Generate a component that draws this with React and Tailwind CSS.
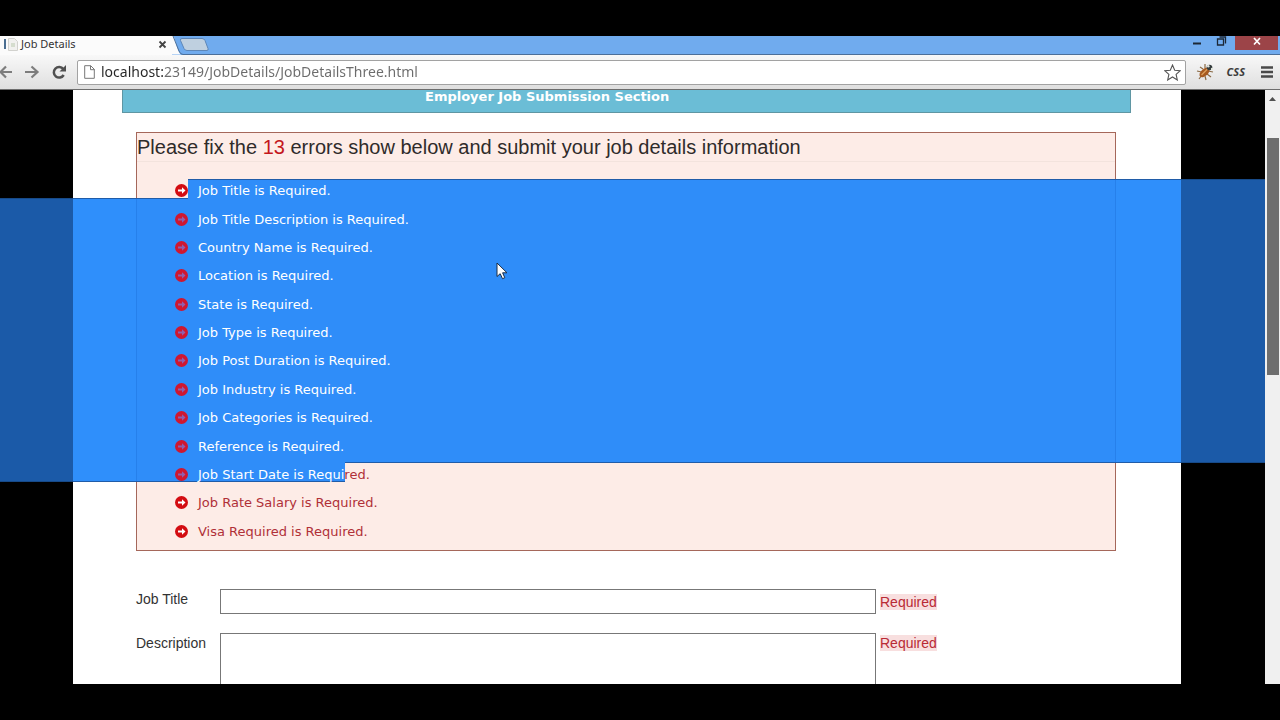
import clsx from "clsx";

const errors = [
  "Job Title is Required.",
  "Job Title Description is Required.",
  "Country Name is Required.",
  "Location is Required.",
  "State is Required.",
  "Job Type is Required.",
  "Job Post Duration is Required.",
  "Job Industry is Required.",
  "Job Categories is Required.",
  "Reference is Required.",
  "Job Start Date is Required.",
  "Job Rate Salary is Required.",
  "Visa Required is Required.",
];

// The selection stops in the middle of this row
const lastSelected = 10;
const selectedPart = "Job Start Date is Requi";

function Bullet({ selected }) {
  return (
    <svg className="size-[14px] shrink-0" viewBox="0 0 14 14" aria-hidden="true">
      <circle cx="6.5" cy="6.5" r="6.5" fill={selected ? "#cf1730" : "#d30c12"} />
      <path
        d="M3 5.5h4V3.2L10.5 6.500l-3.500 3.300V7.500H3z"
        fill={selected ? "#8f5fae" : "#ffffff"}
      />
    </svg>
  );
}

function TabStrip() {
  return (
    <div className="flex h-[19px] shrink-0 bg-[#70abee]">
      <div className="flex h-full w-[172px] shrink-0 items-start bg-[#fbfbfb] pl-1">
        <svg className="mt-[2px] h-[13px] w-[14px] shrink-0" viewBox="0 0 14 13" aria-hidden="true">
          <path d="M0 1h2v10H0z" fill="#4b6e91" />
          <path d="M4.5 .5h6l3 3v9h-9z" fill="#f1f1ef" stroke="#d2d2ce" />
          <path d="M7 6h4M7 8h4" stroke="#b9c9ad" />
        </svg>
        <span className="ml-[3px] flex-1 font-['Noto_Sans',sans-serif] text-[11px] leading-4 text-[#333]">Job Details</span>
        <button type="button" aria-label="Close tab" className="mr-[5px] mt-1">
          <svg className="size-[9px]" viewBox="0 0 9 9">
            <path d="M1.5 1.5l6 6M7.5 1.5l-6 6" stroke="#444" strokeWidth="1.8" />
          </svg>
        </button>
      </div>
      <button type="button" aria-label="New tab" className="h-full w-[40px] shrink-0">
        <svg className="h-[19px] w-[40px]" viewBox="0 0 40 19">
          <path d="M0 0h1c2 0 4 16 8 18.500H0z" fill="#fbfbfb" />
          <path d="M1 0l6 15q1.500 3.500 4 3.500H40" fill="none" stroke="#4c6f99" />
          <path d="M10 2.500h20q2 0 3 2l3 8q.6 2-1 2H15q-2 0-3-2L8.500 4.500q-.5-2 1.500-2z" fill="#bfd0e0" stroke="#5e87b8" />
        </svg>
      </button>
      <div className="flex-1 border-b border-[#4c6f99]" />
      <div className="flex items-start border-b border-[#4c6f99]">
        <button type="button" aria-label="Minimize" className="w-6">
          <svg className="h-[14px] w-6" viewBox="0 0 24 14">
            <path d="M6 7.500h8" stroke="#1c2836" strokeWidth="2" />
          </svg>
        </button>
        <button type="button" aria-label="Restore" className="w-6">
          <svg className="h-[14px] w-6" viewBox="0 0 24 14">
            <path d="M6.500 3h6v6h-6zM8.500 1h6v6.500" fill="none" stroke="#1c2836" strokeWidth="1.300" />
          </svg>
        </button>
        <button type="button" aria-label="Close" className="mr-[2px] flex h-[14px] w-[43px] justify-center bg-[#9c4448]">
          <svg className="h-[12px] w-[10px]" viewBox="0 0 10 12">
            <path d="M2 2l6 6.500M8 2l-6 6.500" stroke="#fff" strokeWidth="1.700" />
          </svg>
        </button>
      </div>
    </div>
  );
}

function Toolbar() {
  return (
    <div className="flex h-[35px] shrink-0 items-center border-b border-[#6d6d6d] bg-linear-to-b from-[#f8f8f8] to-[#dfdfdf]">
      <button type="button" aria-label="Back" className="w-[22px]">
        <svg className="h-4 w-[22px]" viewBox="0 0 22 16">
          <path d="M12 8H0M6 2.500L0.500 8 6 13.500" fill="none" stroke="#7d7d7d" strokeWidth="2.200" />
        </svg>
      </button>
      <button type="button" aria-label="Forward" className="w-[28px]">
        <svg className="h-4 w-[28px]" viewBox="0 0 28 16">
          <path d="M3 8h12M9.500 2.500L15.500 8l-6 5.500" fill="none" stroke="#7d7d7d" strokeWidth="2.200" />
        </svg>
      </button>
      <button type="button" aria-label="Reload" className="w-[27px]">
        <svg className="h-4 w-[27px]" viewBox="0 0 27 16">
          <path d="M13.300 5A5.300 5.300 0 1 0 13.700 11" fill="none" stroke="#505050" strokeWidth="2.500" />
          <path d="M16 1v6.500H9.500z" fill="#505050" />
        </svg>
      </button>
      <div className="flex h-[25px] flex-1 items-center rounded-[2px] border border-[#a2a2a2] bg-white pl-[6px] pr-1">
        <svg className="h-[14px] w-[11px]" viewBox="0 0 11 14" aria-hidden="true">
          <path d="M.7.700h6l3.600 3.600v9H.7zM6.500.700v4h4" fill="#fff" stroke="#777" />
        </svg>
        <input
          aria-label="Address"
          className="ml-[6px] min-w-0 flex-1 bg-[linear-gradient(90deg,#262626_62px,#6c6c6c_62px)] bg-clip-text font-['Noto_Sans',sans-serif] text-[14px] leading-5 text-transparent outline-none"
          defaultValue="localhost:23149/JobDetails/JobDetailsThree.html"
        />
        <button type="button" aria-label="Bookmark this page">
          <svg className="size-[17px]" viewBox="0 0 17 17">
            <path d="M8.500 1l2.200 5.200 5.600.5-4.200 3.700 1.200 5.600-4.800-3-4.800 3 1.200-5.600L.7 6.700l5.600-.5z" fill="#fff" stroke="#555" strokeWidth="1.100" />
          </svg>
        </button>
      </div>
      <button type="button" aria-label="Firebug" className="ml-[10px]">
        <svg className="h-[18px] w-[19px]" viewBox="0 0 19 18">
          <path d="M7 6L4 4M5.500 9L1 8M6 12l-3 4M9 13l1 4M11 11l4 3M12 8l5 1M9 5l0-4" fill="none" stroke="#8a6a45" strokeWidth="1.200" />
          <ellipse cx="8.500" cy="9.500" rx="6" ry="3.500" transform="rotate(-42 8.500 9.500)" fill="#a65a20" />
          <path d="M5.500 12l6-6" stroke="#dda05c" strokeWidth="1.200" />
          <circle cx="13.500" cy="4.500" r="2.800" fill="#333b3c" />
          <circle cx="12.300" cy="3.300" r="1.200" fill="#e5e8df" />
          <circle cx="16" cy="6" r="1.200" fill="#e5e8df" />
        </svg>
      </button>
      <button type="button" className="ml-3 font-['Noto_Sans',sans-serif] text-[11px] font-bold italic leading-4 text-[#3c3c3c]">
        CSS
      </button>
      <button type="button" aria-label="Menu" className="ml-4 mr-[7px]">
        <svg className="h-3 w-3" viewBox="0 0 12 12">
          <path d="M0 1.500h12M0 6h12M0 10.500h12" stroke="#4a4a4a" strokeWidth="2.400" />
        </svg>
      </button>
    </div>
  );
}

function ErrorSummary() {
  return (
    <section className="ml-[63px] mr-[65px] mt-[19px] h-[419px] border border-[#a5675a] bg-[#fdece7]">
      <h2 className="border-b border-[#f3e3dd] font-['Liberation_Sans',sans-serif] text-[20px] leading-7 text-[#2f2b2a]">
        Please fix the <span className="text-[#c4161c]">13</span> errors show below and submit your job details information
      </h2>
      <ul className="relative z-10 mt-[15px] grid h-[369px] auto-rows-fr pl-[38px] font-['DejaVu_Sans',Verdana,sans-serif] text-[13px]">
        {errors.map((text, idx) => (
          <li key={text} className="flex items-center gap-[9px] leading-4">
            <Bullet selected={idx > 0 && idx <= lastSelected} />
            {idx === lastSelected ? (
              <span className="text-[#b03038]">
                <span className="text-white">{selectedPart}</span>
                {text.slice(selectedPart.length)}
              </span>
            ) : (
              <span className={clsx(idx < lastSelected ? "text-white" : "text-[#b03038]")}>{text}</span>
            )}
          </li>
        ))}
      </ul>
    </section>
  );
}

function Selection() {
  return (
    <div aria-hidden="true">
      <div className="absolute left-0 top-[108px] h-[284px] w-[115px] border-y border-[#205ca8] bg-[#1883fb]/90" />
      <div className="absolute left-[115px] top-[89px] h-[303px] w-[157px] border-y border-[#205ca8] bg-[#1883fb]/90" />
      <div className="absolute left-[272px] right-0 top-[89px] h-[284px] border-y border-[#205ca8] bg-[#1883fb]/90" />
    </div>
  );
}

function Required() {
  return <span className="bg-[#f8dfdf] leading-4 text-[#b92a35]">Required</span>;
}

function JobForm() {
  return (
    <form className="ml-[63px] mt-[38px] font-['Liberation_Sans',sans-serif] text-[14px] leading-5 text-[#333]">
      <div className="flex items-start">
        <label htmlFor="title" className="w-[84px]">Job Title</label>
        <input id="title" className="h-[25px] w-[656px] border border-[#777] bg-white px-1" />
        <div className="ml-1 flex h-[25px] items-center">
          <Required />
        </div>
      </div>
      <div className="mt-[19px] flex items-start">
        <label htmlFor="description" className="w-[84px]">Description</label>
        <textarea id="description" className="h-[120px] w-[656px] resize-none border border-[#777] bg-white px-1" />
        <div className="ml-1 flex h-5 items-center">
          <Required />
        </div>
      </div>
    </form>
  );
}

export default function App() {
  return (
    <div className="flex h-screen flex-col overflow-hidden bg-black py-9">
      <TabStrip />
      <Toolbar />

      <main className="flex min-h-0 flex-1 overflow-hidden">
        <div className="w-[73px] shrink-0 pt-[108px]">
          <div className="h-[284px] border-y border-[#174a88] bg-[#1b5aa8]" />
        </div>

        <div className="relative flex-1 overflow-hidden bg-white">
          <header className="ml-[49px] mr-[50px] h-[23px] border border-t-0 border-[#5f96a3] bg-[#6bbdd6] pl-[302px] font-['DejaVu_Sans',Verdana,sans-serif] text-[13px] font-bold leading-[14px] text-white">
            Employer Job Submission Section
          </header>
          <ErrorSummary />
          <JobForm />
          <Selection />
          {/* Mouse pointer */}
          <svg className="absolute left-[423px] top-[172px] h-[18px] w-3" viewBox="0 0 12 18" aria-hidden="true">
            <path d="M1 1v13.500l3.200-2.800 2.300 5 2.300-1-2.200-4.900H11z" fill="#fff" stroke="#1b2d45" />
          </svg>
        </div>

        <div className="w-[84px] shrink-0 pt-[89px]">
          <div className="h-[284px] border-y border-[#174a88] bg-[#1b5aa8]" />
        </div>

        <div className="flex w-[15px] shrink-0 flex-col items-center bg-[#f0f0f0] pt-[7px]">
          <svg className="h-1 w-[7px] shrink-0" viewBox="0 0 7 4" aria-hidden="true">
            <path d="M3.500 0L7 4H0z" fill="#505050" />
          </svg>
          <div className="mt-[37px] h-[237px] w-3 shrink-0 bg-[#6e6e6e]" />
        </div>
      </main>
    </div>
  );
}
